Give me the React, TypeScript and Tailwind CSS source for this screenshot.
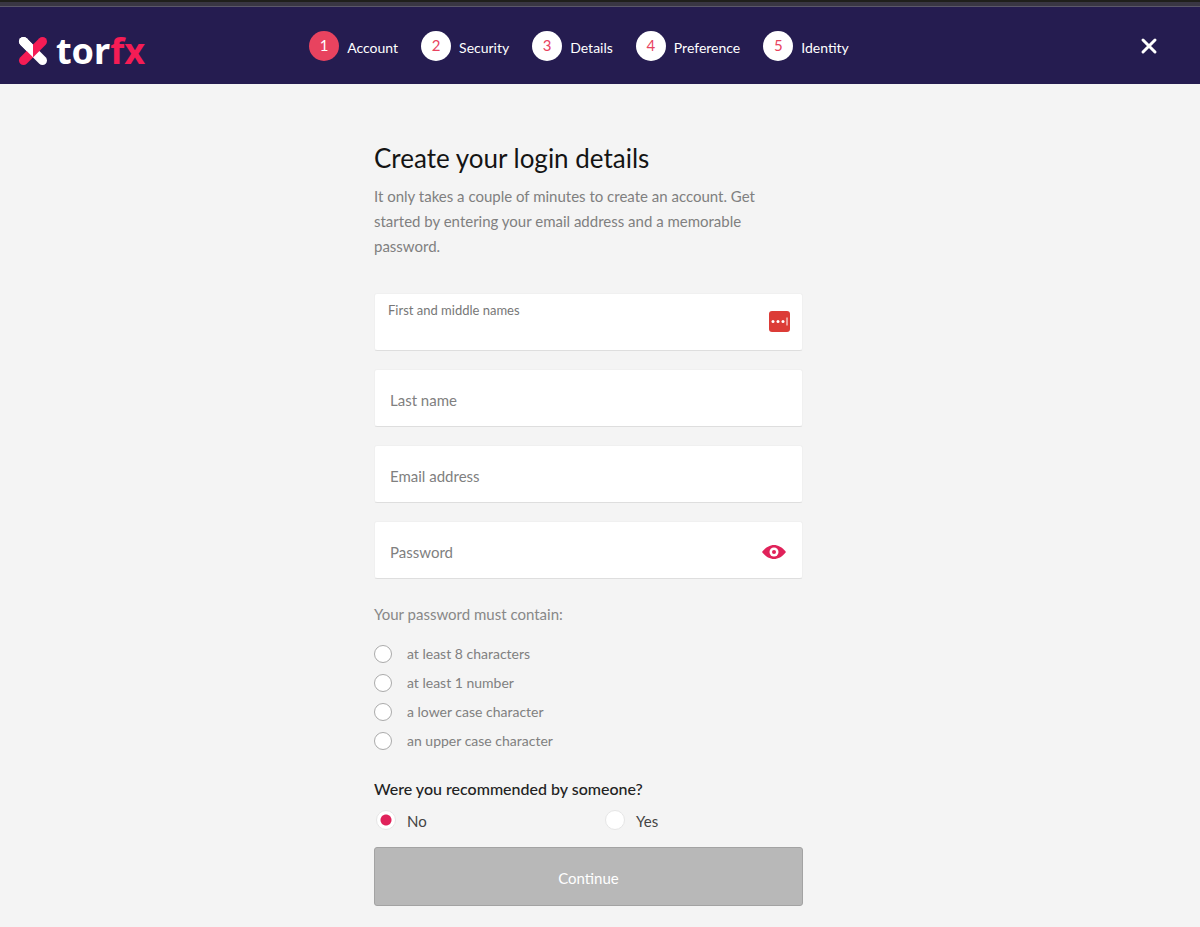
import { useState } from "react";

const STEPS = ["Account", "Security", "Details", "Preference", "Identity"];

const RULES = ["at least 8 characters", "at least 1 number", "a lower case character", "an upper case character"];

function Logo() {
  return (
    <a href="#" aria-label="torfx" className="flex items-center gap-2 justify-self-start pt-2.5">
      <svg viewBox="0 0 30 30" className="h-[30px] w-[30px]" fill="none" strokeLinecap="round" strokeWidth="9">
        <clipPath id="markLeft">
          <path d="M0 0h15v30H0Z" />
        </clipPath>
        <path d="M5.5 5.5 24.5 24.5" stroke="#fff" />
        <path d="M5.5 24.5 24.5 5.5" stroke="#f51c55" />
        <path d="M5.5 5.5 24.5 24.5" stroke="#fff" clipPath="url(#markLeft)" />
      </svg>
      <span className="font-['Noto_Sans'] text-[36px] leading-[44px] font-bold text-white">
        tor<span className="text-[#f51c55]">fx</span>
      </span>
    </a>
  );
}

function PasswordManagerIcon() {
  return (
    <svg viewBox="0 0 21 21" className="h-[21px] w-[21px]" aria-hidden="true">
      <rect width="21" height="21" rx="3" fill="#dc3c37" />
      <circle cx="4" cy="10.5" r="1.5" fill="#fff" />
      <circle cx="9" cy="10.5" r="1.5" fill="#fff" />
      <circle cx="14" cy="10.5" r="1.5" fill="#fff" />
      <path d="M18 6.5v8" stroke="#fff" strokeWidth="1" />
    </svg>
  );
}

function EyeIcon() {
  return (
    <svg viewBox="0 0 24 14" className="h-[14px] w-6" aria-hidden="true">
      <path d="M0 7C4 2 8 0 12 0s8 2 12 7c-4 5-8 7-12 7S4 12 0 7Z" fill="#e0225a" />
      <circle cx="12" cy="7" r="4.5" fill="#fff" />
      <circle cx="12" cy="7" r="2" fill="#e0225a" />
    </svg>
  );
}

type FieldProps = {
  id: string;
  label: string;
  type?: string;
  active: boolean;
  onFocus: () => void;
  children?: React.ReactNode;
};

function Field({ id, label, type = "text", active, onFocus, children }: FieldProps) {
  const [value, setValue] = useState("");
  const raised = active || value !== "";

  return (
    <div className="relative">
      <input
        id={id}
        type={type}
        value={value}
        onChange={(e) => setValue(e.target.value)}
        onFocus={onFocus}
        className="block h-[58px] w-full rounded-[3px] border border-[#f0f0f0] border-b-[#dedede] bg-white px-[13px] pt-5 pr-14 text-[15px] text-[#333] outline-none"
      />
      <label
        htmlFor={id}
        className={
          raised
            ? "pointer-events-none absolute top-2 left-[14px] text-[13px] leading-[18px] text-[#777]"
            : "pointer-events-none absolute top-5 left-4 text-[15px] leading-[22px] text-[#808080]"
        }
      >
        {label}
      </label>
      {children}
    </div>
  );
}

export default function App() {
  const [focused, setFocused] = useState("firstNames");
  const [showPassword, setShowPassword] = useState(false);
  const [recommended, setRecommended] = useState("no");

  return (
    <div className="min-h-screen bg-[#f4f4f4] font-[Lato,sans-serif]">
      <div className="h-[7px] border-t-2 border-b border-t-[#1f1f1b] border-b-[#5a5768] bg-[#393643]" />
      <header className="grid h-[77px] grid-cols-[1fr_auto_1fr] items-center bg-[#251c50] pr-[42px] pl-[18px]">
        <Logo />
        <ol className="flex pl-[5px]">
          {STEPS.map((step, i) => (
            <li key={step} className="flex items-center pr-[23px] text-[14px] text-white">
              <span
                className={
                  i === 0
                    ? "mr-2 flex h-[30px] w-[30px] items-center justify-center rounded-full bg-[#e8435f] text-[15px]"
                    : "mr-2 flex h-[30px] w-[30px] items-center justify-center rounded-full bg-white text-[15px] text-[#e8435f]"
                }
              >
                {i + 1}
              </span>
              <span className="pt-[3px]">{step}</span>
            </li>
          ))}
        </ol>
        <button type="button" aria-label="Close" className="justify-self-end">
          <svg viewBox="0 0 18 18" className="h-[18px] w-[18px]" stroke="#fff" strokeWidth="3" strokeLinecap="round">
            <path d="M3 3l12 12M15 3 3 15" />
          </svg>
        </button>
      </header>

      <main className="pt-[56px] pr-[23px] pb-[21px]">
        <form className="mx-auto max-w-[429px]" onSubmit={(e) => e.preventDefault()}>
          <h1 className="text-[26px] leading-9 text-[#141414]">Create your login details</h1>
          <p className="mt-2 pr-8 text-[15px] leading-[25px] text-[#808080]">
            It only takes a couple of minutes to create an account. Get started by entering your email address and a
            memorable password.
          </p>

          <div className="mt-[34px] flex flex-col gap-[18px]">
            <Field
              id="firstNames"
              label="First and middle names"
              active={focused === "firstNames"}
              onFocus={() => setFocused("firstNames")}
            >
              <span className="absolute top-[18px] right-[13px]">
                <PasswordManagerIcon />
              </span>
            </Field>
            <Field
              id="lastName"
              label="Last name"
              active={focused === "lastName"}
              onFocus={() => setFocused("lastName")}
            />
            <Field
              id="email"
              label="Email address"
              type="email"
              active={focused === "email"}
              onFocus={() => setFocused("email")}
            />
            <Field
              id="password"
              label="Password"
              type={showPassword ? "text" : "password"}
              active={focused === "password"}
              onFocus={() => setFocused("password")}
            >
              <button
                type="button"
                aria-label="Show password"
                onClick={() => setShowPassword(!showPassword)}
                className="absolute top-6 right-[17px]"
              >
                <EyeIcon />
              </button>
            </Field>
          </div>

          <p className="mt-[23px] text-[15px] leading-[25px] text-[#888]">Your password must contain:</p>
          <ul className="mt-3">
            {RULES.map((rule) => (
              <li key={rule} className="flex h-[29px] items-center gap-[15px] text-[14px] text-[#808080]">
                <span className="h-[18px] w-[18px] rounded-full border border-[#aaa] bg-white" />
                {rule}
              </li>
            ))}
          </ul>

          <fieldset>
            <legend className="pt-[22px] text-[16px] leading-6 font-medium text-[#222]">
              Were you recommended by someone?
            </legend>
            <div className="grid grid-cols-[229px_1fr] pt-[5px] pb-[14px] pl-[2px] text-[15px] text-[#444]">
              {["No", "Yes"].map((option) => (
                <label key={option} className="flex items-center gap-[11px] leading-6">
                  <input
                    type="radio"
                    name="recommended"
                    checked={recommended === option.toLowerCase()}
                    onChange={() => setRecommended(option.toLowerCase())}
                    className="h-5 w-5 appearance-none rounded-full border border-[#e6e6e6] bg-white checked:bg-[radial-gradient(circle,#e0225a_5px,#fff_6px)]"
                  />
                  <span className="pt-[3px]">{option}</span>
                </label>
              ))}
            </div>
          </fieldset>

          <button
            type="submit"
            className="h-[59px] w-full rounded-[3px] border border-[#a3a3a3] bg-[#b8b8b8] pt-1 text-[15px] text-white"
          >
            Continue
          </button>
        </form>
      </main>
    </div>
  );
}
